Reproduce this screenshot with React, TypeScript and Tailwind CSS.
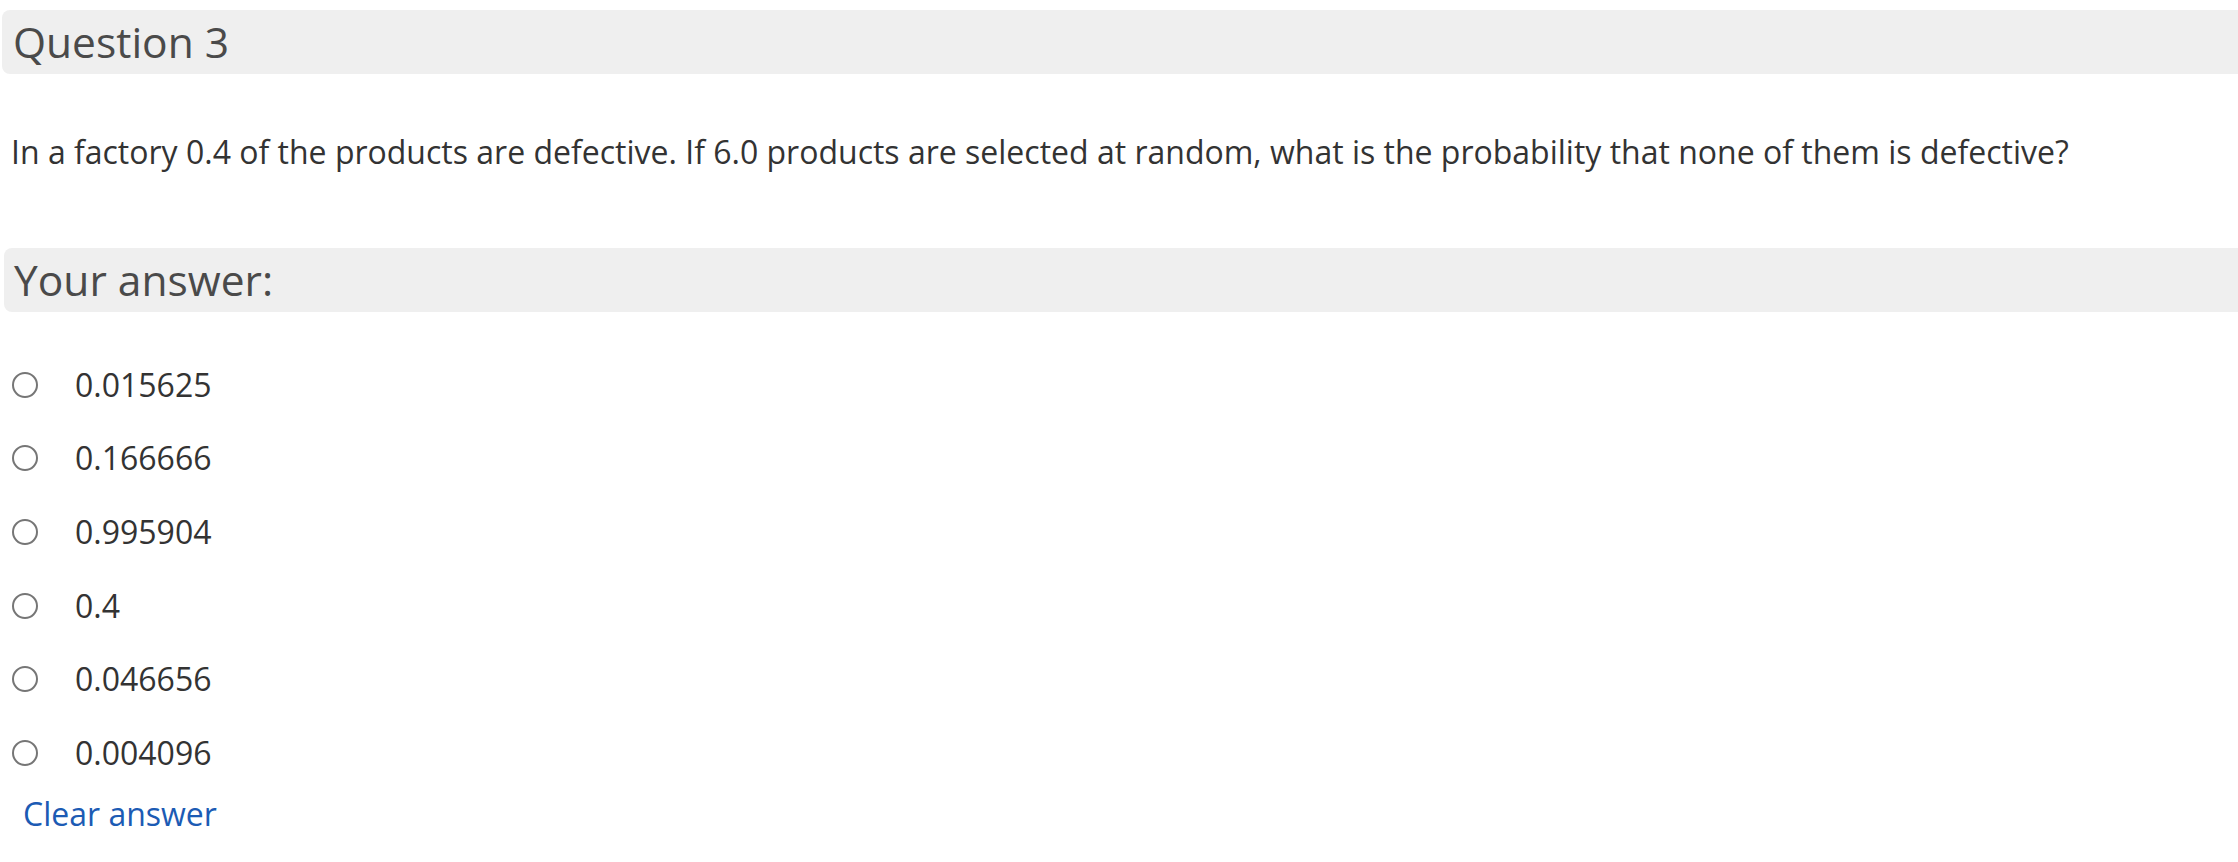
const options = ['0.015625', '0.166666', '0.995904', '0.4', '0.046656', '0.004096'];

export default function App() {
  return (
    <div className="min-h-screen w-full bg-white font-['Open_Sans',sans-serif] text-[#333333]">
      <div className="pt-[10px]">
        <h3 className="ml-[2px] flex h-[64px] items-center rounded-l-[8px] bg-[#efefef] pl-[11px] text-[42.5px] font-normal text-[#4a4a4a]">
          Question 3
        </h3>
      </div>

      <p className="mt-[54px] pl-[11px] text-[32px] leading-[48px]">
        In a factory 0.4 of the products are defective. If 6.0 products are selected at random, what is the
        probability that none of them is defective?
      </p>

      <h4 className="ml-[4px] mt-[72px] flex h-[64px] items-center rounded-l-[8px] bg-[#efefef] pl-[10px] text-[42.5px] font-normal text-[#4a4a4a]">
        Your answer:
      </h4>

      <div className="mt-[36px] flex flex-col">
        {options.map((o) => (
          <label key={o} className="flex h-[73.6px] items-center gap-[37px] pl-[12px]">
            <input
              type="radio"
              name="answer"
              className="h-[26px] w-[26px] appearance-none rounded-full border-2 border-[#767676] bg-white"
            />
            <span className="text-[32px] leading-[48px]">{o}</span>
          </label>
        ))}
      </div>

      <a href="#" className="block pl-[23px] text-[32px] leading-[48px] text-[#1c5bb4]">
        Clear answer
      </a>
    </div>
  );
}
